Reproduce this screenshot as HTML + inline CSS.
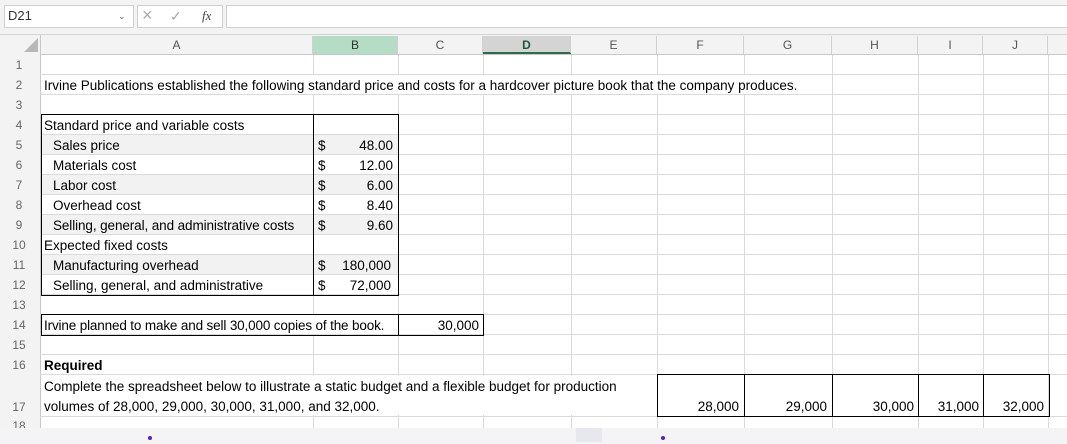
<!DOCTYPE html>
<html><head><style>
body{margin:0;width:1067px;height:444px;overflow:hidden;background:#fff;font-family:"Liberation Sans",sans-serif;position:relative}
.a{position:absolute}
.t{position:absolute;font-size:13.5px;color:#000;white-space:nowrap;line-height:20px;margin-top:1px}
.vl{position:absolute;width:1px;background:#dadada;top:55px;height:373px}
.hl{position:absolute;height:1px;background:#dadada;left:40px;width:1027px}
.rn{position:absolute;left:0;width:38px;text-align:center;font-size:12px;color:#666;line-height:20px}
.ch{position:absolute;top:36px;height:18px;line-height:18px;text-align:center;font-size:12px;color:#555;border-right:1px solid #d0d0d0}
</style></head><body>
<div class="a" style="left:0;top:0;width:1067px;height:34px;background:#f3f3f3;border-bottom:1px solid #d4d4d4"></div>
<div class="a" style="left:4px;top:5px;width:128px;height:21px;background:#fff;border:1px solid #d0d0d0"></div>
<div class="t" style="left:8px;top:5px;font-size:13px;color:#333">D21</div>
<div class="t" style="left:118px;top:5px;font-size:9px;color:#666">&#8964;</div>
<div class="a" style="left:137px;top:5px;width:84px;height:21px;background:#fff;border:1px solid #d0d0d0"></div>
<div class="t" style="left:142px;top:4px;font-size:18px;color:#aaa">&#215;</div>
<div class="t" style="left:170px;top:5px;font-size:14px;color:#aaa">&#10003;</div>
<div class="t" style="left:202px;top:5px;font-family:'Liberation Serif',serif;font-style:italic;font-size:13px;color:#444">fx</div>
<div class="a" style="left:226px;top:5px;width:841px;height:21px;background:#fff;border:1px solid #d0d0d0"></div>
<div class="a" style="left:0;top:35px;width:1067px;height:19px;background:#f3f3f3;border-bottom:1px solid #c8c8c8"></div>
<div class="a" style="left:0;top:35px;width:40px;height:393px;background:#f3f3f3;border-right:1px solid #c8c8c8"></div>
<div class="a" style="left:24px;top:38px;width:0;height:0;border-left:14px solid transparent;border-bottom:14px solid #b8b8b8"></div>
<div class="ch" style="left:41px;width:271px">A</div>
<div class="ch" style="left:313px;width:84px;background:#b5dcc4;color:#333">B</div>
<div class="ch" style="left:398px;width:84px">C</div>
<div class="ch" style="left:483px;width:87px;background:#d4d4d4;color:#1e5a3a;font-weight:bold;height:16px;border-bottom:2px solid #2f6b4b">D</div>
<div class="ch" style="left:571px;width:85px">E</div>
<div class="ch" style="left:657px;width:86px">F</div>
<div class="ch" style="left:744px;width:87px">G</div>
<div class="ch" style="left:832px;width:85px">H</div>
<div class="ch" style="left:918px;width:64px">I</div>
<div class="ch" style="left:983px;width:64px">J</div>
<div class="a" style="left:41px;top:135px;width:357px;height:20px;background:#f2f2f2"></div>
<div class="a" style="left:41px;top:175px;width:357px;height:20px;background:#f2f2f2"></div>
<div class="a" style="left:41px;top:215px;width:357px;height:20px;background:#f2f2f2"></div>
<div class="a" style="left:41px;top:255px;width:357px;height:20px;background:#f2f2f2"></div>
<div class="vl" style="left:313px"></div><div class="vl" style="left:398px"></div><div class="vl" style="left:483px"></div>
<div class="vl" style="left:571px"></div><div class="vl" style="left:657px"></div><div class="vl" style="left:744px"></div>
<div class="vl" style="left:832px"></div><div class="vl" style="left:918px"></div><div class="vl" style="left:983px"></div><div class="vl" style="left:1048px"></div>
<div class="hl" style="top:74px"></div><div class="hl" style="top:94px"></div><div class="hl" style="top:114px"></div>
<div class="hl" style="top:134px"></div><div class="hl" style="top:154px"></div><div class="hl" style="top:174px"></div>
<div class="hl" style="top:194px"></div><div class="hl" style="top:214px"></div><div class="hl" style="top:234px"></div>
<div class="hl" style="top:254px"></div><div class="hl" style="top:274px"></div><div class="hl" style="top:294px"></div>
<div class="hl" style="top:314px"></div><div class="hl" style="top:334px"></div><div class="hl" style="top:354px"></div>
<div class="hl" style="top:374px"></div><div class="hl" style="top:416px"></div>
<div class="a" style="left:42px;top:75px;width:760px;height:19px;background:#fff"></div>
<div class="a" style="left:42px;top:376px;width:614px;height:39px;background:#fff"></div>
<div class="a" style="left:42px;top:315px;width:355px;height:19px;background:#fff"></div>
<div class="a" style="left:41px;top:114px;width:356px;height:180px;border:1px solid #000"></div>
<div class="a" style="left:313px;top:114px;width:1px;height:181px;background:#000"></div>
<div class="a" style="left:41px;top:314px;width:441px;height:20px;border:1px solid #000"></div>
<div class="a" style="left:398px;top:314px;width:1px;height:21px;background:#000"></div>
<div class="a" style="left:657px;top:374px;width:391px;height:41px;border:1px solid #000"></div>
<div class="a" style="left:744px;top:374px;width:1px;height:42px;background:#000"></div>
<div class="a" style="left:832px;top:374px;width:1px;height:42px;background:#000"></div>
<div class="a" style="left:918px;top:374px;width:1px;height:42px;background:#000"></div>
<div class="a" style="left:983px;top:374px;width:1px;height:42px;background:#000"></div>
<div class="rn" style="top:55px">1</div><div class="rn" style="top:75px">2</div><div class="rn" style="top:95px">3</div>
<div class="rn" style="top:115px">4</div><div class="rn" style="top:135px">5</div><div class="rn" style="top:155px">6</div>
<div class="rn" style="top:175px">7</div><div class="rn" style="top:195px">8</div><div class="rn" style="top:215px">9</div>
<div class="rn" style="top:235px">10</div><div class="rn" style="top:255px">11</div><div class="rn" style="top:275px">12</div>
<div class="rn" style="top:295px">13</div><div class="rn" style="top:315px">14</div><div class="rn" style="top:335px">15</div>
<div class="rn" style="top:355px">16</div><div class="rn" style="top:397px">17</div><div class="rn" style="top:416px">18</div>
<div class="t" style="left:44px;top:75px">Irvine Publications established the following standard price and costs for a hardcover picture book that the company produces.</div>
<div class="t" style="left:44px;top:115px">Standard price and variable costs</div>
<div class="t" style="left:53px;top:135px">Sales price</div>
<div class="t" style="left:53px;top:155px">Materials cost</div>
<div class="t" style="left:53px;top:175px">Labor cost</div>
<div class="t" style="left:53px;top:195px">Overhead cost</div>
<div class="t" style="left:53px;top:215px;letter-spacing:-0.1px">Selling, general, and administrative costs</div>
<div class="t" style="left:44px;top:235px">Expected fixed costs</div>
<div class="t" style="left:53px;top:255px">Manufacturing overhead</div>
<div class="t" style="left:53px;top:275px">Selling, general, and administrative</div>
<div class="t" style="left:318px;top:135px">$</div><div class="t" style="left:318px;top:155px">$</div><div class="t" style="left:318px;top:175px">$</div>
<div class="t" style="left:318px;top:195px">$</div><div class="t" style="left:318px;top:215px">$</div><div class="t" style="left:318px;top:255px">$</div><div class="t" style="left:318px;top:275px">$</div>
<div class="t" style="right:674px;top:135px">48.00</div>
<div class="t" style="right:674px;top:155px">12.00</div>
<div class="t" style="right:674px;top:175px">6.00</div>
<div class="t" style="right:674px;top:195px">8.40</div>
<div class="t" style="right:674px;top:215px">9.60</div>
<div class="t" style="right:676px;top:255px">180,000</div>
<div class="t" style="right:676px;top:275px">72,000</div>
<div class="t" style="left:44px;top:315px;letter-spacing:-0.15px">Irvine planned to make and sell 30,000 copies of the book.</div>
<div class="t" style="right:588px;top:315px">30,000</div>
<div class="t" style="left:44px;top:355px;font-weight:bold">Required</div>
<div class="t" style="left:44px;top:376px">Complete the spreadsheet below to illustrate a static budget and a flexible budget for production</div>
<div class="t" style="left:44px;top:396px">volumes of 28,000, 29,000, 30,000, 31,000, and 32,000.</div>
<div class="t" style="right:328px;top:396px">28,000</div>
<div class="t" style="right:240px;top:396px">29,000</div>
<div class="t" style="right:153px;top:396px">30,000</div>
<div class="t" style="right:88px;top:396px">31,000</div>
<div class="t" style="right:23px;top:396px">32,000</div>
<div class="a" style="left:0;top:428px;width:1067px;height:16px;background:#f4f4f6"></div>
<div class="a" style="left:148px;top:436px;width:4px;height:4px;border-radius:50%;background:#5a1ec8"></div>
<div class="a" style="left:661px;top:436px;width:4px;height:4px;border-radius:50%;background:#5a1ec8"></div>
<div class="a" style="left:576px;top:428px;width:26px;height:14px;background:#e6e8ee"></div>
</body></html>
